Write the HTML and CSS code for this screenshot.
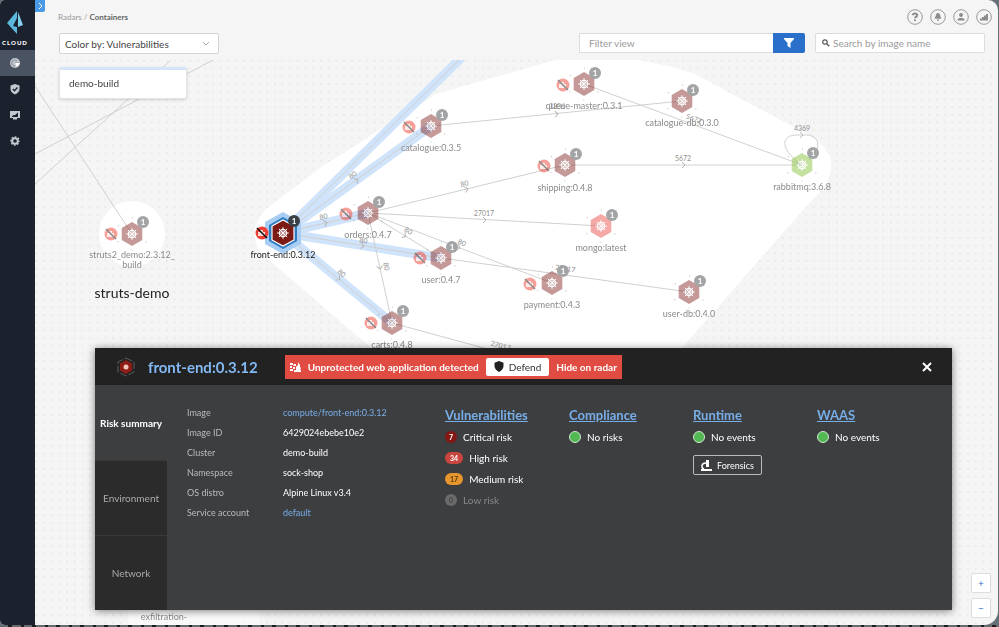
FILE: index.html
```html
<!DOCTYPE html>
<html lang="en">
<head>
  <meta charset="UTF-8">
  <title>Radars / Containers</title>
  <link rel="stylesheet" href="styles.css">
</head>
<body>

  <div class="app">
    <nav class="sidebar">
      <div class="logo">
        <svg width="18" height="24" viewBox="0 0 18 24">
          <path d="M11 0 L1 12 L11 23 V16 L7 15 L11 7 Z" fill="#5cb8dc"/>
          <path d="M12 1 L17 14 L12 16 Z" fill="#7fd0ea"/>
        </svg>
        <span>CLOUD</span>
      </div>
      <a href="#" class="side-link active" aria-label="Radars">
        <svg width="12" height="12" viewBox="0 0 12 12">
          <circle cx="6" cy="6" r="5" fill="#c3c8cf"/>
          <path d="M6 6 H10 M6 6 L9 9 M8 4 A3 3 0 1 0 6 9" fill="none" stroke="#7b8490"/>
          <path d="M6 6 L11 6 L8 10 Z" fill="#fff"/>
        </svg>
      </a>
      <a href="#" class="side-link" aria-label="Defend">
        <svg width="12" height="12" viewBox="0 0 12 12">
          <path d="M6 1 L10.500 2.500 V6 C10.500 9 8 10.500 6 11.500 C4 10.500 1.500 9 1.500 6 V2.500 Z" fill="#c3c8cf"/>
          <path d="M3.800 6 L5.500 7.700 L8.400 4.500" fill="none" stroke="#1b212d" stroke-width="1.400"/>
        </svg>
      </a>
      <a href="#" class="side-link" aria-label="Monitor">
        <svg width="12" height="12" viewBox="0 0 12 12">
          <path d="M1 2 H11 V9 H8 V10.500 H4 V9 H1 Z" fill="#c3c8cf"/>
          <path d="M3 8 V7 L5 6 L6 6 L9 3.500 V8 Z" fill="#1b212d"/>
        </svg>
      </a>
      <a href="#" class="side-link" aria-label="Manage">
        <svg width="12" height="12" viewBox="0 0 12 12">
          <circle cx="6" cy="6" r="2.800" fill="none" stroke="#c3c8cf" stroke-width="2"/>
          <circle cx="6" cy="6" r="4" fill="none" stroke="#c3c8cf" stroke-width="1.600" stroke-dasharray="1.700 1.440" stroke-dashoffset="0.850"/>
        </svg>
      </a>
    </nav>

    <main class="main">
      <button class="expand" aria-label="Expand menu">
        <svg width="6" height="8" viewBox="0 0 6 8"><path d="M2 1 L5 4 L2 7" fill="none" stroke="#fff"/></svg>
      </button>

      <header class="topbar">
        <div class="breadcrumb"><a href="#">Radars</a> / <b>Containers</b></div>
        <div class="top-icons">
          <button aria-label="Help">
            <svg width="16" height="16" viewBox="0 0 16 16"><circle cx="8" cy="8" r="7.300"/><path class="line" d="M5.800 6.300 C5.800 3.800 10.200 3.800 10.200 6.200 C10.200 7.600 8 7.600 8 9.300 M8 10.500 V12"/></svg>
          </button>
          <button aria-label="Alerts">
            <svg width="16" height="16" viewBox="0 0 16 16"><circle cx="8" cy="8" r="7.300"/><path d="M8 4 C10.500 4 10 7.500 11.500 9.800 H4.500 C6 7.500 5.500 4 8 4 Z M7 10.500 H9 V11.800 H7 Z"/></svg>
          </button>
          <button aria-label="Profile">
            <svg width="16" height="16" viewBox="0 0 16 16"><circle cx="8" cy="8" r="7.300"/><path d="M8 4 a2 2 0 1 1 0 4 a2 2 0 1 1 0 -4 Z M4.500 11.500 V10.500 C4.500 8.500 11.500 8.500 11.500 10.500 V11.500 Z"/></svg>
          </button>
          <button aria-label="Statistics">
            <svg width="16" height="16" viewBox="0 0 16 16"><circle cx="8" cy="8" r="7.300"/><path d="M4 11.500 V9.500 H6 V8 H8 V6.500 H10 V5 H12 V11.500 Z"/></svg>
          </button>
        </div>
      </header>

      <div class="toolbar">
        <div class="select-wrap">
          <select aria-label="Color by">
            <option>Color by: Vulnerabilities</option>
            <option>Color by: Compliance</option>
          </select>
          <svg width="8" height="6" viewBox="0 0 8 6"><path d="M1 1 L4 4 L7 1" fill="none" stroke="#aaa"/></svg>
        </div>
        <div class="filter">
          <input type="text" placeholder="Filter view" aria-label="Filter view">
          <button aria-label="Apply filter">
            <svg width="10" height="10" viewBox="0 0 10 10"><path d="M0 0 H10 V1 L6.500 5 V10 L3.500 8 V5 L0 1 Z" fill="#fff"/></svg>
          </button>
        </div>
        <label class="search">
          <svg width="8" height="8" viewBox="0 0 8 8"><circle cx="3" cy="3" r="2.200" fill="none" stroke="#555" stroke-width="1.200"/><path d="M4.700 4.700 L7.300 7.300" stroke="#555" stroke-width="1.300"/></svg>
          <input type="text" placeholder="Search by image name" aria-label="Search by image name">
        </label>
      </div>

      <section class="canvas">
        <svg class="graph" width="100%" height="100%">
          <defs>
            <pattern id="dots" x="5" y="-3" width="7.700" height="7.700" patternUnits="userSpaceOnUse">
              <circle cx="3.800" cy="3.800" r="0.700" fill="#d9dadb"/>
            </pattern>
            <g id="wheel" fill="none" stroke="#fff">
              <circle r="3.600" stroke-width="1.300"/>
              <circle r="1.200" fill="#fff" stroke="none"/>
              <path d="M0 -5.800 V5.800 M-5.800 0 H5.800 M-4.100 -4.100 L4.100 4.100 M-4.100 4.100 L4.100 -4.100" stroke-width="1"/>
            </g>
            <g id="node">
              <circle r="16" fill="none" stroke="#777" stroke-width="1.200" stroke-dasharray="1 15.760" stroke-dashoffset="8.880"/>
              <path d="M0 -12 L10.300 -6 V6 L0 12 L-10.300 6 V-6 Z"/>
              <use href="#wheel"/>
            </g>
            <g id="blocked">
              <circle r="6.500" fill="#ee4035"/>
              <path d="M-4 3 V-1 H-2 V-3 H1 V-1 H3 V3 Z" fill="#fff" opacity="0.800"/>
              <path d="M-5 -5 L5 5" stroke="#111" stroke-width="1.500"/>
            </g>
            <path id="arrow" d="M-2 -3 L1 0 L-2 3" fill="none" stroke="#b5b5b5"/>
          </defs>

          <rect width="100%" height="100%" fill="url(#dots)"/>

          <g transform="translate(-35 -60)">
            <!-- namespace areas -->
            <path class="area" d="M265 210 L320 168 L436 94 L555 60 Q625 50 695 74 L812 137 Q845 158 822 190 L803 210 L682 348 L640 390 H420 L262 254 Q246 232 265 210 Z"/>
            <circle class="area" cx="132" cy="234" r="33"/>
            <rect class="area" x="128" y="606" width="132" height="20" opacity="0.500"/>

            <!-- highlighted connections -->
            <g class="hot">
              <path d="M283 233 L459 60 L480 40"/>
              <path d="M283 233 L431 126"/>
              <path d="M283 233 L368 213"/>
              <path d="M283 233 L441 258"/>
              <path d="M283 233 L392 323"/>
            </g>

            <g class="edges">
              <path d="M35 86 L132 234 M35 154 L213 60 M35 184 L171 60"/>
              <path d="M283 233 L459 60 M283 233 L431 126 M283 233 L368 213 M283 233 L441 258 M283 233 L392 323"/>
              <path d="M431 126 L682 101 M584 84 L802 165 M368 213 L565 165 M565 165 H802 M368 213 L601 226"/>
              <path d="M368 213 L441 258 M368 213 L552 283 M368 213 L392 323 M441 258 L689 292 M392 323 L620 385"/>
              <path d="M802 165 C780 150 780 135 797 135 H807 C822 136 820 152 809 160"/>
            </g>

            <use href="#arrow" transform="translate(357 180) rotate(-35)"/>
            <use href="#arrow" transform="translate(326 223) rotate(-13)"/>
            <use href="#arrow" transform="translate(363 246) rotate(9)"/>
            <use href="#arrow" transform="translate(339 279) rotate(40)"/>
            <use href="#arrow" transform="translate(557 114) rotate(-6)"/>
            <use href="#arrow" transform="translate(467 189) rotate(-14)"/>
            <use href="#arrow" transform="translate(684 165)"/>
            <use href="#arrow" transform="translate(485 220)"/>
            <use href="#arrow" transform="translate(405 236) rotate(32)"/>
            <use href="#arrow" transform="translate(459 248) rotate(21)"/>
            <use href="#arrow" transform="translate(380 268) rotate(78)"/>
            <use href="#arrow" transform="translate(802 135)"/>

            <g class="ports">
              <text transform="translate(354 177) rotate(-35)">80</text>
              <text transform="translate(324 219) rotate(-13)">80</text>
              <text transform="translate(363 243) rotate(9)">80</text>
              <text transform="translate(340 275) rotate(40)">80</text>
              <text x="557" y="109">3306</text>
              <text transform="translate(465 186) rotate(-14)">80</text>
              <text x="683" y="161">5672</text>
              <text transform="translate(693 121) rotate(20)">5672</text>
              <text x="484" y="216">27017</text>
              <text transform="translate(407 233) rotate(32)">80</text>
              <text transform="translate(461 245) rotate(21)">80</text>
              <text transform="translate(384 267) rotate(78)">80</text>
              <text transform="translate(565 271) rotate(8)">27017</text>
              <text transform="translate(500 348) rotate(15)">27017</text>
              <text x="802" y="131">4369</text>
            </g>

            <!-- containers -->
            <g class="nodes">
              <g class="critical">
                <use href="#node" x="132" y="234"/>
                <use href="#node" x="431" y="126"/>
                <use href="#node" x="584" y="84"/>
                <use href="#node" x="682" y="101"/>
                <use href="#node" x="565" y="165"/>
                <use href="#node" x="368" y="213"/>
                <use href="#node" x="441" y="258"/>
                <use href="#node" x="552" y="283"/>
                <use href="#node" x="689" y="292"/>
                <use href="#node" x="392" y="323"/>
              </g>
              <use class="high" href="#node" x="601" y="226"/>
              <use class="ok" href="#node" x="802" y="165"/>
            </g>
            <g class="blocks">
              <use href="#blocked" x="111" y="234"/>
              <use href="#blocked" x="409" y="127"/>
              <use href="#blocked" x="563" y="85"/>
              <use href="#blocked" x="544" y="166"/>
              <use href="#blocked" x="346" y="214"/>
              <use href="#blocked" x="420" y="258"/>
              <use href="#blocked" x="530" y="284"/>
              <use href="#blocked" x="371" y="323"/>
            </g>
            <g class="badges">
              <circle cx="143" cy="222" r="6"/><text x="143" y="225">1</text>
              <circle cx="442" cy="115" r="6"/><text x="442" y="118">1</text>
              <circle cx="595" cy="73" r="6"/><text x="595" y="76">1</text>
              <circle cx="693" cy="90" r="6"/><text x="693" y="93">1</text>
              <circle cx="576" cy="154" r="6"/><text x="576" y="157">1</text>
              <circle cx="379" cy="202" r="6"/><text x="379" y="205">1</text>
              <circle cx="452" cy="247" r="6"/><text x="452" y="250">1</text>
              <circle cx="563" cy="271" r="6"/><text x="563" y="274">1</text>
              <circle cx="700" cy="281" r="6"/><text x="700" y="284">1</text>
              <circle cx="403" cy="311" r="6"/><text x="403" y="314">1</text>
              <circle cx="612" cy="215" r="6"/><text x="612" y="218">1</text>
              <circle cx="813" cy="153" r="6"/><text x="813" y="156">1</text>
            </g>
            <g class="labels">
              <text x="132" y="258">struts2_demo:2.3.12_</text>
              <text x="132" y="268">build</text>
              <text x="431" y="151">catalogue:0.3.5</text>
              <text x="584" y="109">queue-master:0.3.1</text>
              <text x="682" y="126">catalogue-db:0.3.0</text>
              <text x="565" y="191">shipping:0.4.8</text>
              <text x="368" y="238">orders:0.4.7</text>
              <text x="441" y="283">user:0.4.7</text>
              <text x="552" y="308">payment:0.4.3</text>
              <text x="689" y="317">user-db:0.4.0</text>
              <text x="392" y="348">carts:0.4.8</text>
              <text x="601" y="251">mongo:latest</text>
              <text x="802" y="190">rabbitmq:3.6.8</text>
              <text x="164" y="620">exfiltration-</text>
            </g>

            <!-- selected container -->
            <path d="M283 212 L301 222 V244 L283 254 L265 244 V222 Z" fill="#a8cdf5"/>
            <path d="M283 217 L297 225 V241 L283 249 L269 241 V225 Z" fill="#2f7cc0"/>
            <path d="M283 220 L294 226 V240 L283 246 L272 240 V226 Z" fill="#7c1a16" stroke="#fff" stroke-width="1.200"/>
            <use href="#wheel" x="283" y="233"/>
            <use href="#blocked" x="262" y="233"/>
            <g class="badges selected"><circle cx="294" cy="221" r="6"/><text x="294" y="224">1</text></g>
            <text class="selected-label" x="283" y="258">front-end:0.3.12</text>
            <text class="group-label" x="132" y="298">struts-demo</text>
          </g>
        </svg>

        <div class="cluster-card">demo-build</div>

        <div class="zoom">
          <button aria-label="Zoom in">+</button>
          <button aria-label="Zoom out">−</button>
        </div>

        <article class="panel">
          <header class="panel-head">
            <svg width="20" height="22" viewBox="-10 -11 20 22">
              <path d="M0 -9 L8 -5 V5 L0 9 L-8 5 V-5 Z" fill="none" stroke="#5c5c5c" stroke-dasharray="7 2"/>
              <path d="M0 -7 L6 -3.500 V3.500 L0 7 L-6 3.500 V-3.500 Z" fill="#8d1d16"/>
              <circle r="2.500" fill="#f0c4bd"/>
            </svg>
            <h2>front-end:0.3.12</h2>
            <div class="alert">
              <svg width="11" height="10" viewBox="0 0 11 10" fill="#fff">
                <path d="M0 1 H3 V3 H0 Z M4 2 H6 V4 H3 Z M0 4 H2 V6 H0 Z M3 5 H5 V7 H3 Z M0 7 H3 V9 H0 Z M4 8 H11 V10 H4 Z"/>
                <path d="M8 0 L10 3 V5 L11 6 L10 8 H6 V5 L8 3 Z"/>
              </svg>
              <span>Unprotected web application detected</span>
              <button class="defend">
                <svg width="10" height="11" viewBox="0 0 10 11"><path d="M5 0 L9.500 1.700 V5 C9.500 8 7 10 5 11 C3 10 0.500 8 0.500 5 V1.700 Z" fill="#222"/></svg>
                Defend
              </button>
              <a href="#">Hide on radar</a>
            </div>
            <button class="close" aria-label="Close">
              <svg width="10" height="10" viewBox="0 0 10 10"><path d="M1 1 L9 9 M9 1 L1 9" stroke="#fff" stroke-width="2"/></svg>
            </button>
          </header>

          <div class="panel-body">
            <div class="tabs">
              <button class="tab active">Risk summary</button>
              <button class="tab">Environment</button>
              <button class="tab">Network</button>
            </div>

            <dl class="details">
              <dt>Image</dt><dd><a href="#">compute/front-end:0.3.12</a></dd>
              <dt>Image ID</dt><dd>6429024ebebe10e2</dd>
              <dt>Cluster</dt><dd>demo-build</dd>
              <dt>Namespace</dt><dd>sock-shop</dd>
              <dt>OS distro</dt><dd>Alpine Linux v3.4</dd>
              <dt>Service account</dt><dd><a href="#">default</a></dd>
            </dl>

            <div class="risks">
              <section>
                <h3><a href="#">Vulnerabilities</a></h3>
                <p><span class="count crit">7</span>Critical risk</p>
                <p><span class="count hi">34</span>High risk</p>
                <p><span class="count med">17</span>Medium risk</p>
                <p class="muted"><span class="count low">0</span>Low risk</p>
              </section>
              <section>
                <h3><a href="#">Compliance</a></h3>
                <p><span class="dot"></span>No risks</p>
              </section>
              <section>
                <h3><a href="#">Runtime</a></h3>
                <p><span class="dot"></span>No events</p>
                <button class="forensics">
                  <svg width="11" height="11" viewBox="0 0 11 11" fill="#fff"><path d="M5 0 H8 V7 H5 Z M0 9 H11 V11 H0 Z"/><path d="M5 3 C0 3 0 8 3 9" fill="none" stroke="#fff" stroke-width="1.500"/></svg>
                  Forensics
                </button>
              </section>
              <section>
                <h3><a href="#">WAAS</a></h3>
                <p><span class="dot"></span>No events</p>
              </section>
            </div>
          </div>
        </article>
      </section>
    </main>
  </div>
  <div class="bottom-edge"></div>

</body>
</html>
```
FILE: styles.css
```css
* {
  box-sizing: border-box;
}

body {
  margin: 0;
  height: 100vh;
  display: flex;
  flex-direction: column;
  overflow: hidden;
  background: #667078;
  font-family: Lato, "Liberation Sans", sans-serif;
  font-size: 10px;
  color: #444;
}

button, input, select {
  font: inherit;
  color: inherit;
  margin: 0;
  padding: 0;
  border: 0;
  background: none;
}

button { cursor: pointer; }
a { color: inherit; text-decoration: none; }
svg { display: block; flex: none; }

.app {
  flex: 1;
  min-height: 0;
  display: flex;
  margin-right: 1px;
  border-radius: 5px 10px 14px 5px;
  overflow: hidden;
  background: #f5f5f5;
}

.bottom-edge {
  height: 2px;
  background: repeating-linear-gradient(to right, #666b6e 0 8px, #1d1d1d 8px 12px, #666b6e 12px 21px, #1d1d1d 21px 24px);
}

/* sidebar */
.sidebar {
  width: 35px;
  flex: none;
  background: #1b212d;
}

.logo {
  height: 50px;
  padding: 11px 5px 0 0;
  display: flex;
  flex-direction: column;
  align-items: center;
  gap: 4px;
  color: #fff;
  font-size: 6px;
  line-height: 8px;
  font-weight: 900;
  letter-spacing: 1px;
}

.side-link {
  height: 26px;
  display: flex;
  align-items: center;
  justify-content: center;
  padding-right: 6px;
}

.side-link.active { background: #4a5361; }

/* top */
.main {
  position: relative;
  flex: 1;
  min-width: 0;
  display: flex;
  flex-direction: column;
}

.expand {
  position: absolute;
  left: 0;
  top: 0;
  width: 10px;
  height: 12px;
  display: flex;
  align-items: center;
  justify-content: center;
  background: #4a9ae8;
  border-radius: 0 0 2px 0;
}

.topbar {
  height: 33px;
  padding: 0 6px 0 23px;
  display: flex;
  align-items: center;
  justify-content: space-between;
}

.breadcrumb { font-size: 8px; color: #999; }
.breadcrumb b { color: #666; }

.top-icons {
  display: flex;
  gap: 7px;
}

.top-icons circle { fill: none; stroke: #999; }
.top-icons path { fill: #8c8c8c; }
.top-icons .line { fill: none; stroke: #8c8c8c; stroke-width: 2; }

.toolbar {
  height: 27px;
  padding: 0 13px 6px 24px;
  display: flex;
}

.select-wrap {
  position: relative;
  width: 160px;
}

.select-wrap select {
  appearance: none;
  width: 100%;
  height: 21px;
  padding: 0 5px;
  border: 1px solid #d5d5d5;
  border-radius: 2px;
  background: #fff;
}

.select-wrap svg {
  position: absolute;
  right: 9px;
  top: 8px;
  pointer-events: none;
}

.filter {
  display: flex;
  width: 226px;
  height: 20px;
  margin-left: auto;
}

.filter input {
  flex: 1;
  min-width: 0;
  padding: 0 9px;
  border: 1px solid #ddd;
  border-right: 0;
  background: #fff;
}

.filter button {
  width: 32px;
  display: flex;
  align-items: center;
  justify-content: center;
  background: #2a6fc9;
  border-radius: 0 2px 2px 0;
}

.search {
  width: 170px;
  height: 20px;
  margin-left: 10px;
  padding: 0 6px;
  display: flex;
  align-items: center;
  gap: 3px;
  border: 1px solid #ddd;
  border-radius: 2px;
  background: #fff;
}

.search input { flex: 1; min-width: 0; }
::placeholder { color: #9a9a9a; opacity: 1; }

/* radar canvas */
.canvas {
  position: relative;
  flex: 1;
  min-height: 0;
}

.graph {
  position: absolute;
  left: 0;
  top: 0;
}

.graph text { text-anchor: middle; }
.area { fill: #fff; }
.hot { fill: none; stroke: #cfe3fb; stroke-width: 9; }
.edges { fill: none; stroke: #d0d0d0; stroke-width: 1; }
.ports { font-size: 7px; fill: #909090; }
.nodes { opacity: 0.45; }
.critical { fill: #7e1c1a; }
.high { fill: #e6403c; }
.ok { fill: #7cbc2c; }
.blocks { opacity: 0.5; }
.badges { font-size: 8px; font-weight: bold; fill: #fff; }
.badges circle { fill: #a2a4a6; }
.badges.selected circle { fill: #3a4146; }
.labels { font-size: 9px; fill: #8a8a8a; }
.selected-label { font-size: 9px; fill: #222; }
.group-label { font-size: 14px; fill: #222; }

.cluster-card {
  position: absolute;
  left: 24px;
  top: 7px;
  width: 128px;
  height: 32px;
  padding: 0 9px;
  line-height: 26px;
  border: 1px solid #e4e4e4;
  border-top: 3px solid #d6e4f7;
  border-radius: 3px;
  background: #fff;
  box-shadow: 0 1px 3px rgba(0, 0, 0, 0.15);
}

.zoom {
  position: absolute;
  right: 7px;
  bottom: 7px;
  display: flex;
  flex-direction: column;
  gap: 5px;
}

.zoom button {
  width: 20px;
  height: 20px;
  border: 1px solid #ddd;
  border-radius: 2px;
  background: #fff;
  color: #2a6fc9;
}

/* details panel */
.panel {
  position: absolute;
  left: 60px;
  right: 46px;
  bottom: 15px;
  background: #3d3e40;
  color: #fff;
  box-shadow: 0 1px 8px rgba(0, 0, 0, 0.5);
}

.panel-head {
  height: 37px;
  padding: 0 20px 0 21px;
  display: flex;
  align-items: center;
  background: #222;
}

.panel-head h2 {
  margin: 0 27px 0 12px;
  font-size: 15px;
  color: #83b9f3;
}

.alert {
  height: 24px;
  padding: 0 5px;
  display: flex;
  align-items: center;
  gap: 7px;
  background: #e04c42;
  font-weight: bold;
  white-space: nowrap;
}

.defend {
  height: 18px;
  padding: 0 8px;
  display: flex;
  align-items: center;
  gap: 5px;
  background: #fff;
  border-radius: 2px;
  color: #333;
  font-weight: normal;
}

.close { margin-left: auto; }

.panel-body { display: flex; }

.tabs {
  width: 72px;
  flex: none;
}

.tab {
  display: block;
  width: 100%;
  height: 75px;
  background: #2b2b2b;
  border-top: 1px solid #3a3a3a;
  color: #aaa;
}

.tab.active {
  background: none;
  border: 0;
  color: #fff;
  font-weight: bold;
}

.details {
  width: 258px;
  flex: none;
  margin: 18px 0 0 20px;
  display: grid;
  grid-template-columns: 96px 1fr;
  grid-auto-rows: 20px;
  align-content: start;
  line-height: 20px;
  font-size: 9px;
}

.details dt { color: #bbb; }
.details dd { margin: 0; }
.details a { color: #77aee8; }

.risks {
  flex: 1;
  display: grid;
  grid-template-columns: repeat(4, 124px);
  padding-top: 21px;
}

.risks h3 {
  margin: 0 0 2px;
  font-size: 13px;
  line-height: 18px;
}

.risks h3 a {
  color: #77aee8;
  text-decoration: underline;
}

.risks p {
  margin: 0;
  height: 21px;
  display: flex;
  align-items: center;
  gap: 6px;
}

.risks .muted { color: #888; }

.count {
  min-width: 12px;
  height: 12px;
  padding: 0 4px;
  border-radius: 6px;
  font-size: 7px;
  line-height: 12px;
  font-weight: bold;
  text-align: center;
}

.crit { background: #851713; }
.hi { background: #c9453f; padding: 0 5px; }
.med { background: #e6962d; padding: 0 5px; color: #5b3a10; }
.low { background: #6b6b6b; color: #444; }

.dot {
  width: 12px;
  height: 12px;
  border: 1px solid #cfe5cf;
  border-radius: 50%;
  background: #52b852;
}

.forensics {
  height: 20px;
  margin-top: 8px;
  padding: 0 7px;
  display: flex;
  align-items: center;
  gap: 5px;
  border: 1px solid #bbb;
  border-radius: 2px;
  font-size: 9px;
}
```
